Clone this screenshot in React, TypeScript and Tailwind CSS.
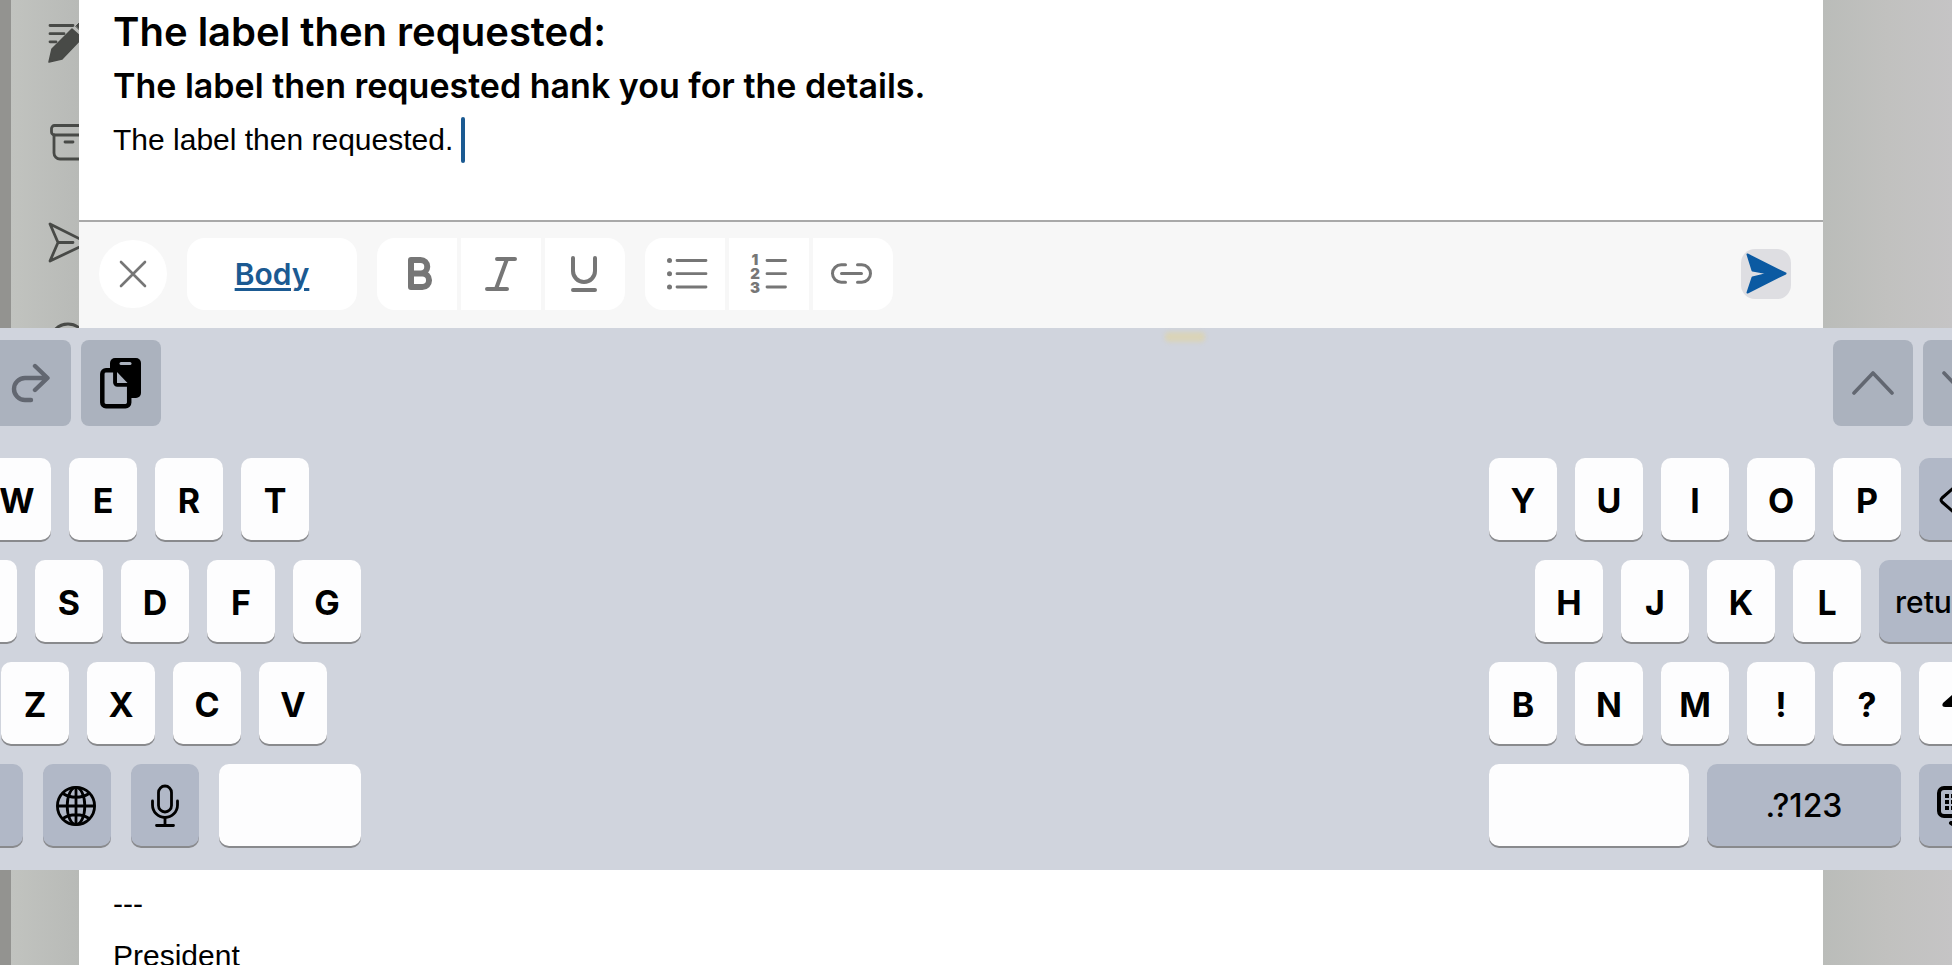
import type { ReactNode } from 'react'

const SANS = "font-['Inter',sans-serif]"
const BODY = "font-['Liberation_Sans',Arial,sans-serif]"

function Backdrop() {
  return (
    <div className="w-[129px] shrink-0 bg-linear-to-r from-[#babcb9] via-[#c1c1bf] to-[#c5c4c5]" />
  )
}

function Rail({ children }: { children?: ReactNode }) {
  return (
    <div className="flex w-[79px] shrink-0 overflow-hidden">
      <div className="w-[11px] shrink-0 bg-[#939390]" />
      <nav className="flex grow flex-col gap-[60px] overflow-hidden bg-linear-to-r from-[#c1c3bf] to-[#b8bab7] pt-[22px] pl-9 text-[#484a47]">
        {children}
      </nav>
    </div>
  )
}

function RailIcon({ label, children }: { label: string; children: ReactNode }) {
  return (
    <button aria-label={label} className="size-10 shrink-0">
      <svg viewBox="0 0 40 40" className="size-10 overflow-visible" fill="none" stroke="currentColor" strokeWidth="2.800" strokeLinecap="round" strokeLinejoin="round">
        {children}
      </svg>
    </button>
  )
}

function ToolButton({ label, children }: { label: string; children: ReactNode }) {
  return (
    <button aria-label={label} className="flex h-[72px] w-20 items-center justify-center bg-white text-[#767676] first:rounded-l-[18px] last:rounded-r-[18px]">
      <svg viewBox="0 0 42 42" className="size-[42px] overflow-visible" fill="none" stroke="currentColor" strokeWidth="3" strokeLinecap="round" strokeLinejoin="round">
        {children}
      </svg>
    </button>
  )
}

interface KeyProps {
  label: string
  width?: string
  tone?: 'light' | 'dark'
  align?: string
  text?: string
  children?: ReactNode
}

function Key({ label, width = 'w-[68px]', tone = 'light', align = 'justify-center', text = 'text-[34px] font-bold', children }: KeyProps) {
  const bg = tone === 'light' ? 'bg-[#fdfdfe]' : 'bg-[#b1b8c7]'
  return (
    <button
      aria-label={label}
      className={`flex h-[82px] shrink-0 items-center rounded-[10px] pt-0.5 text-black shadow-[0_2px_0_#898a8d] ${width} ${bg} ${align} ${text}`}
    >
      {children}
    </button>
  )
}

function Letters({ keys }: { keys: string }) {
  return keys.split('').map((k) => (
    <Key key={k} label={k}>{k}</Key>
  ))
}

function BarKey({ label, children }: { label: string; children: ReactNode }) {
  return (
    <button aria-label={label} className="flex h-[86px] w-20 shrink-0 items-center justify-center rounded-lg bg-[#abb2be]">
      {children}
    </button>
  )
}

function Compose() {
  return (
    <main className="flex min-w-0 grow flex-col bg-white">
      <div className="h-[220px] overflow-hidden pt-[5px] pl-[34px] text-black">
        <h1 className={`${SANS} text-[40px] leading-[54px] font-semibold`}>The label then requested:</h1>
        <h2 className={`${SANS} text-[34px] leading-[54px] font-semibold`}>The label then requested hank you for the details.</h2>
        <p className={`${BODY} flex items-center text-[30px] leading-[54px]`}>
          The label then requested.
          <span className="ml-2 h-[46px] w-1 rounded-full bg-[#1b5a92]" />
        </p>
      </div>

      <div className="flex h-[108px] items-center gap-5 border-t-2 border-[#a9a9a9] bg-[#f7f7f7] pr-8 pb-0.5 pl-5">
        <button aria-label="Close" className="flex size-[68px] items-center justify-center rounded-full bg-white">
          <svg viewBox="0 0 28 28" className="size-7 text-[#767676]" stroke="currentColor" strokeWidth="2.600" strokeLinecap="round">
            <path d="M2 2l24 24M26 2L2 26" />
          </svg>
        </button>
        <button className={`${SANS} h-[72px] w-[170px] rounded-[18px] bg-white text-[30px] font-semibold text-[#1b5a92] underline decoration-3 underline-offset-3`}>
          Body
        </button>
        <div className="flex gap-1">
          <ToolButton label="Bold">
            <path strokeWidth="6" d="M15 7h9.500a6.750 6.750 0 0 1 0 13.500H15zM15 20.500h11.300a6.750 6.750 0 0 1 0 13.500H15z" />
          </ToolButton>
          <ToolButton label="Italic">
            <path strokeWidth="4" d="M17 6h18M7 36h20M27 6L16 36" />
          </ToolButton>
          <ToolButton label="Underline">
            <path strokeWidth="4" d="M9 5v13a11 11 0 0 0 22 0V5M9 37h22" />
          </ToolButton>
        </div>
        <div className="flex gap-1">
          <ToolButton label="Bulleted list">
            <path strokeWidth="2.800" d="M13 7.500h29M13 20.700h29M13 34h29" />
            <path strokeWidth="5" d="M5.500 7.500h.01M5.500 20.700h.01M5.500 34h.01" />
          </ToolButton>
          <ToolButton label="Numbered list">
            <path strokeWidth="2.800" d="M19 7.500h18.500M19 20.700h18.500M19 34h18.500" />
            <g fill="currentColor" stroke="none" fontFamily="Inter, sans-serif" fontSize="15" fontWeight="900" textAnchor="middle">
              <text x="7" y="12">1</text>
              <text x="7" y="26">2</text>
              <text x="7" y="40">3</text>
            </g>
          </ToolButton>
          <ToolButton label="Insert link">
            <path d="M13.500 11.800H9.200a8.700 8.700 0 0 0 0 17.400h4.300M25.500 11.800h4.300a8.700 8.700 0 0 1 0 17.400h-4.300M9.500 20.500h20" />
          </ToolButton>
        </div>
        <button aria-label="Send" className="ml-auto flex size-[50px] items-center justify-center rounded-[14px] bg-[#dedee2]">
          <svg viewBox="0 0 50 50" className="size-[50px]" fill="#0b5aa2" stroke="#0b5aa2" strokeWidth="2" strokeLinejoin="round">
            <path d="M6.500 5.500L44.500 24.500L6.500 43.500L11.500 28.500L28 24.500L11.500 21.500z" />
          </svg>
        </button>
      </div>
    </main>
  )
}

function Keyboard() {
  return (
    <section aria-label="Keyboard" className={`${SANS} relative h-[542px] shrink-0 bg-[#d0d4dd] pt-3`}>
      <div className="absolute top-1 left-[1165px] h-2.5 w-10 rounded-sm bg-[#dad4b8] blur-[2px]" />

      <div className="flex justify-between">
        <div className="flex w-[161px] justify-end gap-2.5 overflow-hidden">
          <BarKey label="Redo">
            <svg viewBox="0 0 40 40" className="size-10 text-[#626771]" fill="none" stroke="currentColor" strokeWidth="4.400" strokeLinecap="round" strokeLinejoin="round">
              <path d="M24 3l12.500 12L24 27M35 15H14a11 11 0 0 0 0 22h6" />
            </svg>
          </BarKey>
          <BarKey label="Paste">
            <svg viewBox="0 0 42 52" className="h-[52px] w-[42px]">
              <rect x="10" y="1" width="31" height="40" rx="5" />
              <rect x="19.500" y="5" width="12" height="3" rx="1.500" fill="#abb2be" />
              <path d="M3 14h12v13h13v21H3z" fill="#abb2be" />
              <path d="M17 15l10.500 11H17z" fill="#abb2be" />
              <path d="M15 13.300H6a3.700 3.700 0 0 0-3.700 3.700v28.500a3.700 3.700 0 0 0 3.700 3.700h19.500a3.700 3.700 0 0 0 3.700-3.700V28" fill="none" stroke="#000" strokeWidth="4.500" />
              <path d="M14.800 12v13.500a2.500 2.500 0 0 0 2.500 2.500h13" fill="none" stroke="#000" strokeWidth="3.400" />
            </svg>
          </BarKey>
        </div>
        <div className="flex w-[119px] gap-2.5 overflow-hidden">
          <BarKey label="Previous">
            <svg viewBox="0 0 42 24" className="h-6 w-[42px] text-[#626771]" fill="none" stroke="currentColor" strokeWidth="3.600" strokeLinecap="round" strokeLinejoin="round">
              <path d="M2 22L21 2l19 20" />
            </svg>
          </BarKey>
          <BarKey label="Next">
            <svg viewBox="0 0 42 24" className="h-6 w-[42px] text-[#626771]" fill="none" stroke="currentColor" strokeWidth="3.600" strokeLinecap="round" strokeLinejoin="round">
              <path d="M2 2l19 20L40 2" />
            </svg>
          </BarKey>
        </div>
      </div>

      <div className="flex justify-between pt-8">
        <div className="flex w-[361px] flex-col gap-5 overflow-hidden pb-1">
          <div className="flex justify-end gap-[18px] pr-[52px]">
            <Letters keys="WERT" />
          </div>
          <div className="flex justify-end gap-[18px]">
            <Key label="A" />
            <Letters keys="SDFG" />
          </div>
          <div className="flex justify-end gap-[18px] pr-[34px]">
            <Letters keys="ZXCV" />
          </div>
          <div className="flex justify-end gap-5">
            <Key label="Numbers" tone="dark" />
            <Key label="Next keyboard" tone="dark">
              <svg viewBox="0 0 42 42" className="size-[42px]" fill="none" stroke="#000" strokeWidth="2.800">
                <circle cx="20" cy="21" r="18.600" />
                <ellipse cx="20" cy="21" rx="8.800" ry="18.600" />
                <path d="M20 2v38M1 21h38M7 8.500c7 5 19 5 26 0M7 33.500c7-5 19-5 26 0" />
              </svg>
            </Key>
            <Key label="Dictate" tone="dark">
              <svg viewBox="0 0 30 44" className="h-11 w-[30px]" fill="none" stroke="#000" strokeWidth="2.800" strokeLinecap="round">
                <rect x="8.500" y="2" width="13" height="26" rx="6.500" />
                <path d="M2.500 17v4a12.500 12.500 0 0 0 25 0v-4M15 34v7M6.500 41.500h17" />
              </svg>
            </Key>
            <Key label="Space" width="w-[142px]" />
          </div>
        </div>

        <div className="flex w-[463px] flex-col gap-5 overflow-hidden pb-1">
          <div className="flex gap-[18px]">
            <Letters keys="YUIOP" />
            <Key label="Delete" tone="dark" align="justify-start pl-5">
              <svg viewBox="0 0 48 34" className="h-[34px] w-12 shrink-0" fill="none" stroke="#000" strokeWidth="3" strokeLinejoin="round">
                <path d="M18 2h24a4 4 0 0 1 4 4v22a4 4 0 0 1-4 4H18L3 19q-2-2 0-4z" />
              </svg>
            </Key>
          </div>
          <div className="flex gap-[18px] pl-[46px]">
            <Letters keys="HJKL" />
            <Key label="Return" width="w-[140px]" tone="dark" align="justify-start pl-4" text="text-[30px] font-medium">
              return
            </Key>
          </div>
          <div className="flex gap-[18px]">
            <Letters keys="BNM!?" />
            <Key label="Shift" align="justify-start pl-[22px]">
              <svg viewBox="0 0 46 40" className="h-10 w-[46px] shrink-0">
                <path d="M21 2q2-2 4 0l19 17q2 4-2 4h-8v13q0 3-3 3H15q-3 0-3-3V23H4q-4 0-2-4z" />
              </svg>
            </Key>
          </div>
          <div className="flex gap-[18px]">
            <Key label="Space" width="w-[200px]" />
            <Key label="Numbers and symbols" width="w-[194px]" tone="dark" text="text-[32px] font-medium">
              .?123
            </Key>
            <Key label="Hide keyboard" tone="dark" align="justify-start pl-[18px]">
              <svg viewBox="0 0 48 44" className="h-11 w-12 shrink-0" fill="none" stroke="#000" strokeWidth="4">
                <rect x="2" y="4" width="44" height="28" rx="5" />
                <path strokeDasharray="4 2" d="M8 12h32M8 18h32M8 24h32" />
                <path fill="#000" strokeLinejoin="round" d="M14 39h20l-10 6z" />
              </svg>
            </Key>
          </div>
        </div>
      </div>
    </section>
  )
}

export default function App() {
  return (
    <div className="flex h-screen flex-col overflow-hidden">
      <div className="flex h-[328px] shrink-0 overflow-hidden">
        <Rail>
          <RailIcon label="Drafts">
            <path d="M3 3.500h23M3 11.700h14M3 19.800h6" />
            <path fill="currentColor" strokeWidth="1.500" d="M2 40l3-13L25 7l10 9-20 21z" />
            <path fill="currentColor" strokeWidth="1" d="M29 4l6-6 9 9-6 6z" />
          </RailIcon>
          <RailIcon label="Archive">
            <rect x="4.500" y="3.500" width="36" height="9.500" rx="3" />
            <path d="M7 13v18a6 6 0 0 0 6 6h27M18 20h8" />
          </RailIcon>
          <RailIcon label="Sent">
            <path d="M3 2l38 19L3 39l8-18.500zM11 20.500h15" />
          </RailIcon>
          <RailIcon label="Snoozed">
            <circle cx="21" cy="20" r="18" />
          </RailIcon>
        </Rail>
        <Compose />
        <Backdrop />
      </div>

      <Keyboard />

      <div className="flex min-h-0 grow">
        <Rail />
        <div className={`${BODY} min-w-0 grow overflow-hidden bg-white pt-2 pl-[34px] text-[30px] leading-[52px] text-black`}>
          <p>---</p>
          <p>President</p>
        </div>
        <Backdrop />
      </div>
    </div>
  )
}
